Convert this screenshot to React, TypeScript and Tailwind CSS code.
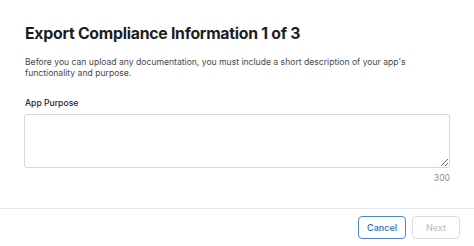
export default function App() {
  return (
    <div className="w-[474px] h-[246px] bg-white flex flex-col overflow-hidden" style={{ fontFamily: "Inter, 'Noto Sans', sans-serif" }}>
      <div className="px-[24px] pt-[24px] flex flex-col">
        <h1 className="pl-[1px] text-[15.8px] leading-[20px] font-bold tracking-[-0.25px] text-[#1d1d1f]">
          Export Compliance Information 1 of 3
        </h1>
        <p className="pl-[1px] mt-[13px] text-[8.6px] leading-[11px] text-[#48484a]">
          Before you can upload any documentation, you must include a short description of your app's
          <br />
          functionality and purpose.
        </p>
        <label className="pl-[1px] mt-[18px] text-[8.6px] leading-[12px] font-medium text-[#1d1d1f]">
          App Purpose
        </label>
        <textarea
          className="mt-[5px] w-[426px] h-[54px] border border-[#d8d8dc] rounded-[3px] outline-none p-1 text-[10px]"
        />
        <div className="mt-[4px] text-right text-[8.6px] leading-[12px] text-[#8e8e93]">300</div>
      </div>
      <div className="mt-[24px] border-t-[1.5px] border-[#e8e8ea] flex justify-end gap-[6px] pr-[14px] pt-[7px]">
        <button className="w-[48px] h-[23px] rounded-[4px] border border-[#4d86c4] text-[#2e6db0] text-[9px] font-medium">
          Cancel
        </button>
        <button className="w-[48px] h-[23px] rounded-[4px] border border-[#dcdce0] text-[#c2c2c7] text-[9px] font-medium">
          Next
        </button>
      </div>
    </div>
  );
}
